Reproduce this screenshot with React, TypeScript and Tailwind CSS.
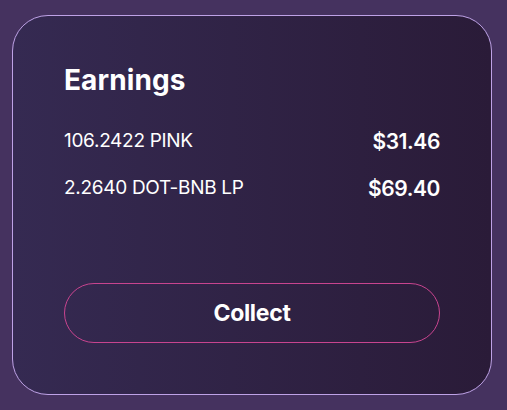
export default function App() {
  const rows = [
    { amount: '106.2422 PINK', value: '$31.46' },
    { amount: '2.2640 DOT-BNB LP', value: '$69.40' },
  ];

  return (
    <div
      className="w-[507px] h-[410px] bg-[#45325f] pt-[15px] px-[12px]"
      style={{ fontFamily: 'Inter, "Liberation Sans", sans-serif' }}
    >
      <div className="w-[480px] h-[380px] rounded-[36px] border border-[#bea2e6] bg-gradient-to-r from-[#352a52] to-[#2a1b38] px-[51px] pt-[47px] text-white">
        <h2 className="text-[28px] leading-[34px] font-bold tracking-[0.1px]">Earnings</h2>

        <div className="mt-[31px] flex flex-col gap-[20px]">
          {rows.map((row) => (
            <div key={row.amount} className="flex items-center justify-between h-[27px]">
              <span className="text-[19px] font-normal tracking-[-0.3px]">{row.amount}</span>
              <span className="text-[21px] font-semibold tracking-[-0.4px]">{row.value}</span>
            </div>
          ))}
        </div>

        <button className="mt-[81px] w-full h-[60px] rounded-full border border-[#c8448f] text-[23px] font-bold tracking-[-0.3px]">
          Collect
        </button>
      </div>
    </div>
  );
}
